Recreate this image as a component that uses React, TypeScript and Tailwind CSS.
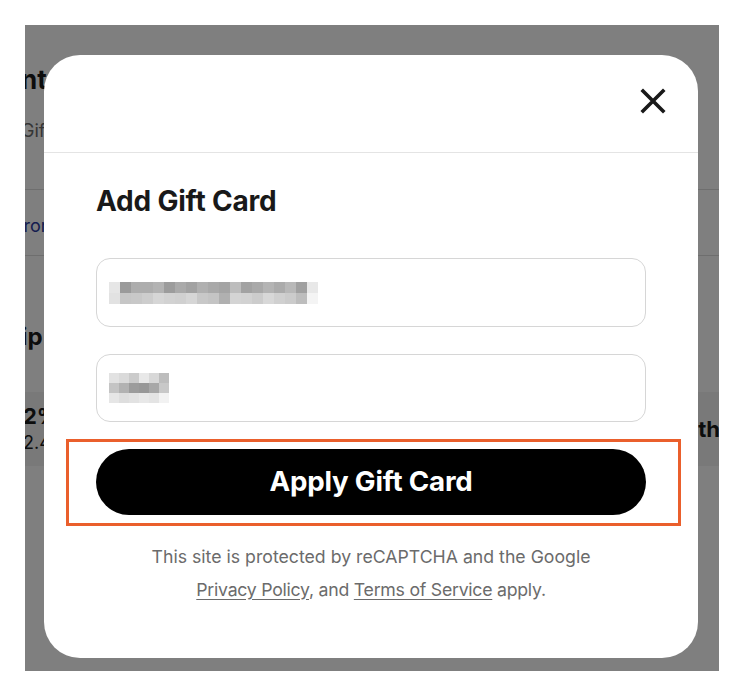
import React from 'react';

const font = { fontFamily: 'Inter, "Noto Sans", sans-serif' };

// redacted values in the two inputs, drawn as a grey mosaic
const cardMosaic = [
  ['#e6e6e6', '#9a9a9a', '#adadad', '#adadad', '#b3b3b3', '#9c9c9c', '#aaaaaa', '#a2a2a2', '#b0b0b0', '#a9a9a9', '#a4a4a4', '#bdbdbd', '#a2a2a2', '#a9a9a9', '#b4b4b4', '#ababab', '#b8b8b8', '#a0a0a0', '#e8e8e8'],
  ['#e2e2e2', '#c6c6c6', '#c8c8c8', '#cdcdcd', '#d6d6d6', '#d2d2d2', '#d0d0d0', '#d6d6d6', '#c8c8c8', '#c4c4c4', '#b0b0b0', '#d4d4d4', '#d2d2d2', '#cccccc', '#d8d8d8', '#d0d0d0', '#cbcbcb', '#bdbdbd', '#f4f4f4'],
];

const pinMosaic = [
  ['#e2e2e2', '#dadada', '#cbcbcb', '#e8e8e8', '#d8d8d8', '#bdbdbd'],
  ['#c4c4c4', '#b2b2b2', '#9c9c9c', '#989898', '#a8a8a8', '#c8c8c8'],
  ['#e6e6e6', '#dedede', '#e2e2e2', '#e8e8e8', '#e4e4e4', '#f2f2f2'],
];

const Mosaic: React.FC<{ rows: string[][]; cell: number }> = ({ rows, cell }) => (
  <div className="flex flex-col">
    {rows.map((row, i) => (
      <div className="flex" key={i}>
        {row.map((c, j) => (
          <div key={j} style={{ background: c, width: cell, height: cell }} />
        ))}
      </div>
    ))}
  </div>
);

const CloseIcon = () => (
  <svg width="26" height="26" viewBox="0 0 26 26" fill="none">
    <path d="M3 3L23 23M23 3L3 23" stroke="#191919" strokeWidth="3.6" strokeLinecap="square" />
  </svg>
);

// the checkout page sitting behind the dimmed overlay
const BackgroundPage = () => (
  <div className="flex flex-col w-full h-full bg-white text-[#1a1a1a]" style={font}>
    <div className="mt-[40px] -ml-[90px] text-[26px] font-bold leading-[30px]">Payment</div>
    <div className="mt-[24px] -ml-[4px] text-[18px] text-[#6b6b6b] leading-[24px]">Gift Cards</div>
    <div className="mt-[46px] h-px bg-[#dcdcdc]" />
    <div className="mt-[24px] -ml-[13px] text-[18px] text-[#2b3a9e] leading-[24px]">Promo Code</div>
    <div className="mt-[17px] h-px bg-[#dcdcdc]" />
    <div className="mt-[66px] -ml-[20px] text-[24px] font-bold leading-[30px]">Tip</div>
    <div className="mt-[40px] h-[74px] bg-[#f2f2f2] flex items-center justify-between">
      <div className="flex flex-col -ml-[2px] gap-[2px]">
        <span className="text-[22px] font-bold leading-[26px]">2%</span>
        <span className="text-[18px] leading-[24px]">2.40</span>
      </div>
      <span className="text-[22px] font-bold leading-[26px] -mr-[1px]">Month</span>
    </div>
  </div>
);

export default function App() {
  return (
    <div className="w-[742px] h-[698px] bg-white p-[25px]">
      <div className="relative w-[694px] h-[646px] overflow-hidden">
        <BackgroundPage />
        <div className="absolute inset-0 bg-black/50" />
        <div
          className="absolute left-[19px] top-[30px] w-[654px] h-[603px] bg-white rounded-[36px] flex flex-col"
          style={font}
        >
          <div className="h-[98px] shrink-0 border-b border-[#e4e4e4] flex items-start justify-end pt-[33px] pr-[32px]">
            <CloseIcon />
          </div>
          <div className="flex flex-col px-[52px] pt-[30px]">
            <h2 className="text-[28px] leading-[36px] font-bold text-[#191919] tracking-[-0.2px]">Add Gift Card</h2>

            <div className="mt-[39px] h-[69px] rounded-[14px] border border-[#d6d6d6] flex items-center pl-[12px]">
              <Mosaic rows={cardMosaic} cell={11} />
            </div>
            <div className="mt-[27px] h-[68px] rounded-[14px] border border-[#d6d6d6] flex items-center pl-[12px]">
              <Mosaic rows={pinMosaic} cell={10} />
            </div>

            <div className="relative mt-[27px]">
              <button className="w-full h-[66px] rounded-full bg-black text-white text-[27.7px] font-bold tracking-[-0.2px]">
                Apply Gift Card
              </button>
              <div className="absolute -left-[30px] -right-[35px] -top-[10px] -bottom-[11px] border-[3px] border-[#ea5f2c] pointer-events-none" />
            </div>

            <div className="mt-[25px] flex flex-col items-center text-[17.7px] leading-[33px] text-[#6b6b6b]">
              <p>This site is protected by reCAPTCHA and the Google</p>
              <p className="tracking-[-0.25px]">
                <a className="underline underline-offset-[3px]">Privacy Policy</a>, and{' '}
                <a className="underline underline-offset-[3px]">Terms of Service</a> apply.
              </p>
            </div>
          </div>
        </div>
      </div>
    </div>
  );
}
